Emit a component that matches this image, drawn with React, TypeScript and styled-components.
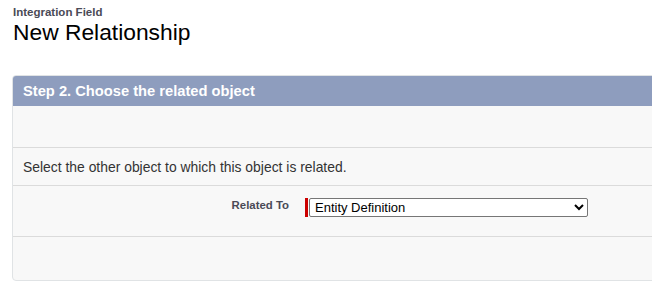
import React from "react";
import styled, { createGlobalStyle } from "styled-components";

const Global = createGlobalStyle`
  html, body { margin: 0; padding: 0; background: #fff; overflow: hidden; }
  body { font-family: "Liberation Sans", Arial, sans-serif; }
`;

const Page = styled.div`
  padding: 6px 0 0 12px;
  width: 700px;
`;

const PageHeader = styled.div`
  padding-left: 1px;
  margin-bottom: 29.6px;
`;

const Kicker = styled.div`
  font-size: 11.5px;
  font-weight: bold;
  color: #4a4a56;
  line-height: 13px;
`;

const Title = styled.h1`
  margin: 0;
  font-size: 22.8px;
  font-weight: normal;
  color: #000;
  line-height: 26.4px;
`;

const Panel = styled.div`
  border: 1px solid #e0e3e5;
  border-radius: 4px;
  background: #f8f8f8;
  overflow: hidden;
`;

const PanelHeader = styled.div`
  background: #8e9dbe;
  height: 31px;
  display: flex;
  align-items: center;
  padding-left: 11px;
  margin: -1px -1px 0 -1px;
  border-radius: 4px 4px 0 0;
`;

const PanelTitle = styled.h2`
  margin: 0;
  font-size: 14.7px;
  font-weight: bold;
  color: #fff;
`;

const Section = styled.div<{ $h: number; $last?: boolean }>`
  height: ${(p) => p.$h}px;
  border-bottom: ${(p) => (p.$last ? "none" : "1px solid #dbdbdb")};
  display: flex;
  align-items: center;
`;

const Instruction = styled.div`
  padding-left: 10px;
  font-size: 13.9px;
  color: #333;
`;

const FormRow = styled.div`
  display: flex;
  align-items: flex-start;
  padding-top: 12px;
  height: 100%;
  box-sizing: border-box;
`;

const Label = styled.label`
  width: 276px;
  text-align: right;
  font-size: 11.4px;
  font-weight: bold;
  color: #4a4a56;
  padding-top: 1px;
  box-sizing: border-box;
`;

const Required = styled.div`
  display: flex;
  margin-left: 16px;
  border-left: 3px solid #c00;
  padding-left: 1px;
  height: 19px;
`;

const Select = styled.select`
  width: 279px;
  height: 19px;
  font-family: "Liberation Sans", Arial, sans-serif;
  font-size: 13px;
  color: #000;
  background: #fff;
  border: 1px solid #767676;
  border-radius: 2px;
  padding: 0 1px;
  margin: 0;
`;

export default function App() {
  return (
    <>
      <Global />
      <Page>
        <PageHeader>
          <Kicker>Integration Field</Kicker>
          <Title>New Relationship</Title>
        </PageHeader>
        <Panel>
          <PanelHeader>
            <PanelTitle>Step 2. Choose the related object</PanelTitle>
          </PanelHeader>
          <Section $h={41} />
          <Section $h={37}>
            <Instruction>Select the other object to which this object is related.</Instruction>
          </Section>
          <Section $h={50}>
            <FormRow>
              <Label>Related To</Label>
              <Required>
                <Select defaultValue="entity">
                  <option value="entity">Entity Definition</option>
                </Select>
              </Required>
            </FormRow>
          </Section>
          <Section $h={43} $last />
        </Panel>
      </Page>
    </>
  );
}
